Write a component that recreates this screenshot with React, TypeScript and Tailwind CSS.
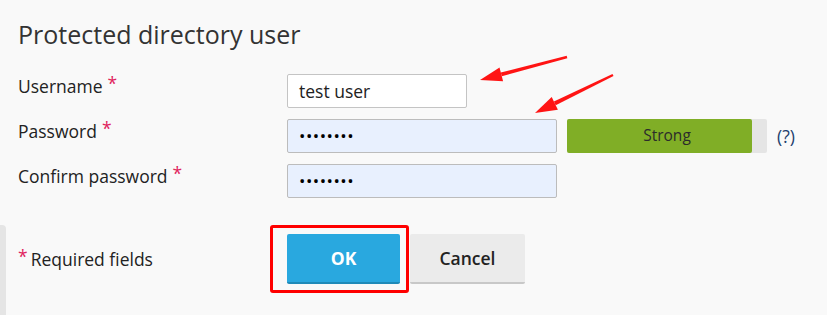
import React from 'react';

const font = { fontFamily: '"Open Sans", "Noto Sans", sans-serif' };

const Req = () => <span className="ml-[5px] text-[#e0245e] relative -top-[3px]">*</span>;

export default function App() {
  return (
    <div className="relative w-[827px] h-[315px] bg-[#f9f9f9] overflow-hidden text-[#333]" style={font}>
      {/* Title */}
      <h1 className="pl-[18px] pt-[18px] text-[25px] leading-8 font-normal text-[#333]">Protected directory user</h1>

      {/* Form rows */}
      <div className="mt-[24px] flex flex-col gap-[11px] pl-[18px]">
        <div className="flex items-start">
          <label className="w-[269px] text-[17.5px] leading-6 text-[#222]">
            Username<Req />
          </label>
          <div className="w-[180px] h-[34px] bg-white border border-[#c4c4c4] rounded-[2px] px-[11px] flex items-center text-[17.5px] text-[#222]">
            test user
          </div>
        </div>

        <div className="flex items-start">
          <label className="w-[269px] text-[17.5px] leading-6 text-[#222]">
            Password<Req />
          </label>
          <div className="w-[270px] h-[34px] bg-[#e8f0fe] border border-[#bcbcbc] rounded-[2px] px-[11px] flex items-center text-[17px] tracking-[0.5px] text-black">
            ••••••••
          </div>
          {/* strength meter: label is centred over the whole track */}
          <div className="ml-[10px] w-[200px] h-[34px] bg-[#e5e5e5] rounded-[2px] relative">
            <div className="w-[185px] h-full bg-[#80ae26] rounded-[2px]" />
            <span className="absolute inset-0 flex items-center justify-center text-[15.5px] text-[#2b2b2b]">Strong</span>
          </div>
          <span className="ml-[10px] h-[34px] flex items-center text-[17.5px] text-[#1d3f6e]">(?)</span>
        </div>

        <div className="flex items-start">
          <label className="w-[269px] text-[17.5px] leading-6 text-[#222]">
            Confirm password<Req />
          </label>
          <div className="w-[270px] h-[34px] bg-[#e8f0fe] border border-[#bcbcbc] rounded-[2px] px-[11px] flex items-center text-[17px] tracking-[0.5px] text-black">
            ••••••••
          </div>
        </div>
      </div>

      {/* Footer */}
      <div className="mt-[27px] flex">
        <div className="w-[6px] h-[90px] bg-[#e5e5e5] rounded-tr-[4px]" />
        <div className="flex items-start pl-[12px]">
          <div className="w-[269px] pt-[22px] text-[17.5px] leading-6 text-[#222]">
            <span className="text-[#e0245e] relative -top-[3px] mr-[3px]">*</span>Required fields
          </div>
          <div className="flex gap-[10px] mt-[9px]">
            <div className="relative">
              <button className="w-[113px] h-[50px] bg-[#29a8df] border-b-2 border-[#1f8ab8] rounded-[2px] text-white text-[17.5px] font-bold">
                OK
              </button>
              <div className="absolute -left-[17px] -right-[9px] -top-[9px] -bottom-[9px] border-[3px] border-[#ff0000] rounded-[3px] pointer-events-none" />
            </div>
            <button className="w-[115px] h-[50px] bg-[#ebebeb] border-b-2 border-[#c8c8c8] rounded-[2px] text-[#222] text-[17.5px] font-semibold">
              Cancel
            </button>
          </div>
        </div>
      </div>

      {/* Annotation arrows */}
      <svg className="absolute inset-0 pointer-events-none" width="827" height="315" viewBox="0 0 827 315">
        <g fill="#ff1414">
          <polygon points="501.8,76.3 500.8,72.5 566.7,55.8 567.3,58.2" />
          <polygon points="480,80 503.1,81.2 499.5,67.6" />
          <polygon points="555.7,105.2 553.9,101.6 612.5,73.9 613.5,76.1" />
          <polygon points="535,113 557.9,109.7 551.7,97.1" />
        </g>
      </svg>
    </div>
  );
}
